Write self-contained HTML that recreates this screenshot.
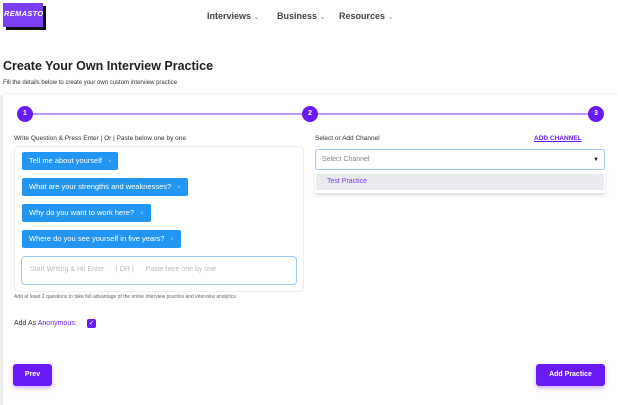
<!DOCTYPE html>
<html><head><style>
*{margin:0;padding:0;box-sizing:border-box}
body{width:618px;height:405px;overflow:hidden;background:#fff;font-family:"Liberation Sans",sans-serif;position:relative;color:#222}
.a{position:absolute}
.logo{left:3px;top:3px;width:40px;height:24px;background:#7b3ff5;box-shadow:3px 3px 0 #111;color:#fff;font-size:7.5px;font-weight:bold;font-style:italic;padding:6px 1px;letter-spacing:.3px}
.nav{top:11px;font-size:9px;font-weight:bold;color:#444}
.card{left:3px;top:95px;width:615px;height:310px;background:#fff;box-shadow:0 0 6px rgba(0,0,0,.08)}
.c{width:16px;height:16px;border-radius:50%;background:#6a1bf5;color:#fff;font-size:7px;font-weight:bold;text-align:center;line-height:16px}
.tag{left:22px;height:18px;background:#2196f3;color:#fff;font-size:7.5px;line-height:18px;padding:0 7px;border-radius:2px}
.tag span{color:#9cd0ff;font-size:6px;margin-left:6px}
.btn{background:#6a1bf5;color:#fff;font-size:7px;font-weight:bold;text-align:center;line-height:22px;border-radius:3px;box-shadow:0 2px 5px rgba(106,27,245,.35);height:22px}
</style></head><body>
<div class="a" style="left:0;top:95px;width:3px;height:310px;background:#f3f3f3"></div>
<div class="a logo">REMASTO</div>
<div class="a nav" style="left:207px">Interviews <span style="font-weight:normal;font-size:7px;color:#888">⌄</span></div>
<div class="a nav" style="left:277px">Business <span style="font-weight:normal;font-size:7px;color:#888">⌄</span></div>
<div class="a nav" style="left:339px">Resources <span style="font-weight:normal;font-size:7px;color:#888">⌄</span></div>
<div class="a" style="left:3px;top:59px;font-size:12.5px;font-weight:bold;color:#222">Create Your Own Interview Practice</div>
<div class="a" style="left:3px;top:80px;font-size:6px;color:#333">Fill the details below to create your own custom interview practice</div>
<div class="a card"></div>
<div class="a" style="left:25px;top:113px;width:571px;height:2px;background:#b99af7"></div>
<div class="a c" style="left:17px;top:106px">1</div>
<div class="a c" style="left:302px;top:106px">2</div>
<div class="a c" style="left:588px;top:106px">3</div>
<div class="a" style="left:14px;top:135px;font-size:6.5px;color:#333">Write Question &amp; Press Enter | Or | Paste below one by one</div>
<div class="a" style="left:14px;top:146px;width:290px;height:146px;border:1px solid #eee;border-radius:4px"></div>
<div class="a tag" style="top:152px">Tell me about yourself<span>×</span></div>
<div class="a tag" style="top:178px">What are your strengths and weaknesses?<span>×</span></div>
<div class="a tag" style="top:204px">Why do you want to work here?<span>×</span></div>
<div class="a tag" style="top:230px">Where do you see yourself in five years?<span>×</span></div>
<div class="a" style="left:21px;top:256px;width:276px;height:29px;border:1.5px solid #9cc9f5;border-radius:4px;font-size:7px;color:#bbb;line-height:26px;padding-left:8px;white-space:pre">Start Writing &amp; Hit Enter      | OR |      Paste here one by one</div>
<div class="a" style="left:14px;top:294px;font-size:5px;color:#666">Add at least 2 questions to take full advantage of the entire interview practice and interview analytics</div>
<div class="a" style="left:14px;top:320px;font-size:7px;color:#333">Add As <span style="color:#6a1bf5">Anonymous:</span></div>
<div class="a" style="left:87px;top:319px;width:9px;height:9px;background:#6a1bf5;border-radius:2px;color:#fff;font-size:7px;line-height:9px;text-align:center">✓</div>
<div class="a" style="left:315px;top:135px;font-size:6.5px;color:#333">Select or Add Channel</div>
<div class="a" style="left:534px;top:135px;font-size:6.5px;font-weight:bold;color:#6a1bf5;text-decoration:underline">ADD CHANNEL</div>
<div class="a" style="left:315px;top:149px;width:290px;height:21px;border:1px solid #9cc9f5;border-radius:3px;font-size:7px;color:#888;line-height:19px;padding-left:6px">Select Channel<span style="position:absolute;right:5px;top:1px;color:#222;font-size:6px">▼</span></div>
<div class="a" style="left:315px;top:170px;width:290px;height:23px;background:#fff;box-shadow:0 2px 4px rgba(0,0,0,.15)"></div>
<div class="a" style="left:316px;top:174px;width:288px;height:16px;background:#e8eaee;font-size:7px;color:#7a3ff5;line-height:16px;padding-left:11px">Test Practice</div>
<div class="a btn" style="left:13px;top:364px;width:39px">Prev</div>
<div class="a btn" style="left:536px;top:364px;width:69px">Add Practice</div>
</body></html>
